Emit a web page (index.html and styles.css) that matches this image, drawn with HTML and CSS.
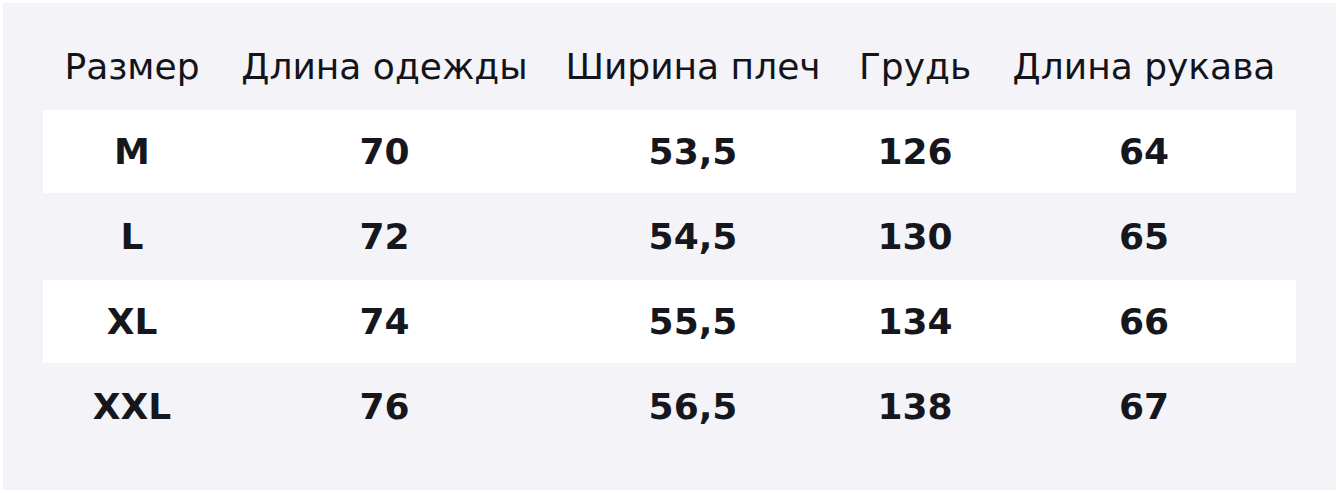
FILE: index.html
```html
<!DOCTYPE html>
<html lang="ru">
<head>
<meta charset="utf-8">
<title>Размеры</title>
<link rel="stylesheet" href="styles.css">
</head>
<body>
<div class="panel">
  <table class="sizes">
    <colgroup>
      <col class="c1"><col class="c2"><col class="c3"><col class="c4"><col class="c5">
    </colgroup>
    <thead>
      <tr><th>Размер</th><th>Длина одежды</th><th>Ширина плеч</th><th>Грудь</th><th>Длина рукава</th></tr>
    </thead>
    <tbody>
      <tr class="odd"><td>M</td><td>70</td><td>53,5</td><td>126</td><td>64</td></tr>
      <tr><td>L</td><td>72</td><td>54,5</td><td>130</td><td>65</td></tr>
      <tr class="odd"><td>XL</td><td>74</td><td>55,5</td><td>134</td><td>66</td></tr>
      <tr><td>XXL</td><td>76</td><td>56,5</td><td>138</td><td>67</td></tr>
    </tbody>
  </table>
</div>
</body>
</html>
```

FILE: styles.css
```css
html, body {
  margin: 0;
  padding: 0;
  background: #ffffff;
}
body {
  padding: 3px;
  font-family: "DejaVu Sans", sans-serif;
  color: #131419;
}
.panel {
  background: #f3f3f8;
  height: 487px;
  box-sizing: border-box;
  padding: 20px 40px 40px;
}
.sizes {
  width: 100%;
  table-layout: fixed;
  border-collapse: separate;
  border-spacing: 0 2px;
  margin: 0;
}
.c1 { width: 178px; }
.c2 { width: 327px; }
.c3 { width: 290px; }
.c4 { width: 154px; }
.c5 { width: 304px; }
.sizes th,
.sizes td {
  height: 83px;
  padding: 0;
  text-align: center;
  vertical-align: middle;
  font-size: 36px;
  white-space: nowrap;
  box-sizing: border-box;
}
.sizes th {
  font-weight: normal;
}
.sizes td {
  font-weight: bold;
  color: #16171c;
}
.sizes tr.odd td {
  background: #ffffff;
}
```
